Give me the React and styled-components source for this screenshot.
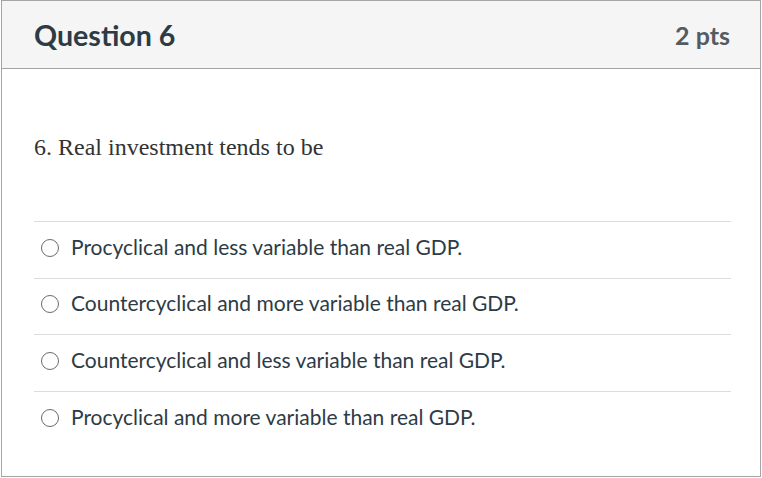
import React from 'react';
import styled, { createGlobalStyle } from 'styled-components';

const GlobalStyle = createGlobalStyle`
  html, body {
    margin: 0;
    padding: 0;
    background: #ffffff;
  }
  body {
    font-family: Lato, "Liberation Sans", sans-serif;
  }
`;

const Card = styled.div`
  box-sizing: border-box;
  width: 760px;
  height: 477px;
  margin-left: 1px;
  border: 1px solid #a5a5a5;
  background: #fff;
`;

const Header = styled.div`
  display: flex;
  justify-content: space-between;
  align-items: center;
  box-sizing: border-box;
  height: 68px;
  padding: 0 30px 0 32px;
  background: #f5f5f5;
  border-bottom: 1px solid #a5a5a5;
`;

const Title = styled.h2`
  margin: 0;
  font-family: Lato, "Liberation Sans", sans-serif;
  font-weight: 700;
  font-size: 28.6px;
  color: #2d3b45;
`;

const Points = styled.span`
  font-family: Lato, "Liberation Sans", sans-serif;
  font-weight: 700;
  font-size: 25px;
  color: #545b61;
`;

const Body = styled.div`
  padding: 64px 29px 0 32px;
`;

const QuestionText = styled.p`
  margin: 0 0 60px;
  font-family: "Liberation Serif", "Times New Roman", serif;
  font-size: 24px;
  line-height: 28px;
  color: #333;
`;

const Options = styled.div`
  display: flex;
  flex-direction: column;
`;

const Option = styled.label`
  box-sizing: border-box;
  display: flex;
  align-items: center;
  gap: 12px;
  height: 56.67px;
  padding: 0 0 7px 7px;
  border-top: 1px solid #dcdcdc;
  font-family: Lato, "Liberation Sans", sans-serif;
  font-size: 21px;
  color: #2d3b45;
`;

const Radio = styled.span`
  box-sizing: border-box;
  width: 18px;
  height: 18px;
  margin-top: 3px;
  border: 1.5px solid #6b6b6b;
  border-radius: 50%;
  flex-shrink: 0;
`;

const answers = [
  'Procyclical and less variable than real GDP.',
  'Countercyclical and more variable than real GDP.',
  'Countercyclical and less variable than real GDP.',
  'Procyclical and more variable than real GDP.',
];

const App = () => (
  <>
    <GlobalStyle />
    <Card>
      <Header>
        <Title>Question 6</Title>
        <Points>2 pts</Points>
      </Header>
      <Body>
        <QuestionText>6. Real investment tends to be</QuestionText>
        <Options>
          {answers.map((a) => (
            <Option key={a}>
              <Radio />
              {a}
            </Option>
          ))}
        </Options>
      </Body>
    </Card>
  </>
);

export default App;
